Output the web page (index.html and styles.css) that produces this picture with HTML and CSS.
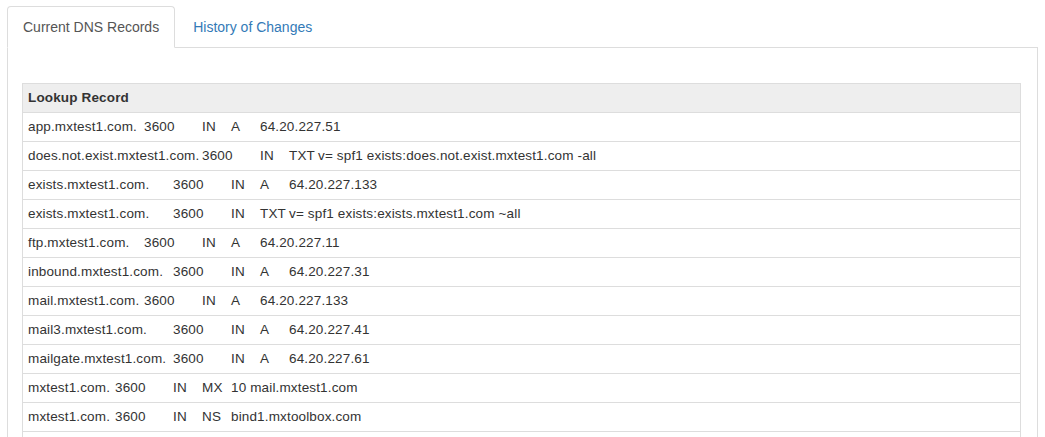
FILE: index.html
```html
<!DOCTYPE html>
<html>
<head>
    <meta charset="utf-8" />
    <title>DNS Records</title>
    <link rel="stylesheet" href="styles.css">
</head>
<body>
    <div class="page">
        <ul class="tabs">
            <li class="tab active"><a href="#">Current DNS Records</a></li>
            <li class="tab"><a href="#">History of Changes</a></li>
        </ul>
        <div class="panel">
            <table class="records">
                <thead>
                    <tr><th>Lookup Record</th></tr>
                </thead>
                <tbody>
                    <tr><td>app.mxtest1.com.	3600	IN	A	64.20.227.51</td></tr>
                    <tr><td>does.not.exist.mxtest1.com.	3600	IN	TXT	v= spf1 exists:does.not.exist.mxtest1.com -all</td></tr>
                    <tr><td>exists.mxtest1.com.	3600	IN	A	64.20.227.133</td></tr>
                    <tr><td>exists.mxtest1.com.	3600	IN	TXT	v= spf1 exists:exists.mxtest1.com ~all</td></tr>
                    <tr><td>ftp.mxtest1.com.	3600	IN	A	64.20.227.11</td></tr>
                    <tr><td>inbound.mxtest1.com.	3600	IN	A	64.20.227.31</td></tr>
                    <tr><td>mail.mxtest1.com.	3600	IN	A	64.20.227.133</td></tr>
                    <tr><td>mail3.mxtest1.com.	3600	IN	A	64.20.227.41</td></tr>
                    <tr><td>mailgate.mxtest1.com.	3600	IN	A	64.20.227.61</td></tr>
                    <tr><td>mxtest1.com.	3600	IN	MX	10 mail.mxtest1.com</td></tr>
                    <tr><td>mxtest1.com.	3600	IN	NS	bind1.mxtoolbox.com</td></tr>
                    <tr><td>mxtest1.com.	3600	IN	NS	bind2.mxtoolbox.com</td></tr>
                </tbody>
            </table>
        </div>
    </div>
</body>
</html>
```

FILE: styles.css
```css
* {
    box-sizing: border-box;
}

body {
    margin: 0;
    font-family: "Liberation Sans", Arial, sans-serif;
    color: #333;
    background: #fff;
}

.page {
    padding: 6px 7px;
}

.tabs {
    display: flex;
    margin: 0;
    padding: 0;
    list-style: none;
    border-bottom: 1px solid #ddd;
}

.tab {
    margin-bottom: -1px;
    margin-right: 2px;
}

.tab a {
    display: block;
    padding: 10px 15px;
    font-size: 14px;
    line-height: 20px;
    color: #337ab7;
    text-decoration: none;
    border: 1px solid transparent;
    border-radius: 4px 4px 0 0;
}

.tab.active a {
    color: #555;
    background: #fff;
    border-color: #ddd;
    border-bottom-color: transparent;
}

.panel {
    border: 1px solid #ddd;
    border-top: none;
    padding: 35px 16px 20px 14px;
}

.records {
    width: 100%;
    border-collapse: collapse;
    border: 1px solid #ddd;
    font-size: 13.5px;
    letter-spacing: 0.15px;
}

.records th,
.records td {
    text-align: left;
    padding: 4px 5px;
    line-height: 20px;
    border-top: 1px solid #ddd;
    white-space: pre;
    tab-size: 29px;
}

.records th {
    background: #eee;
    font-weight: bold;
}
```
